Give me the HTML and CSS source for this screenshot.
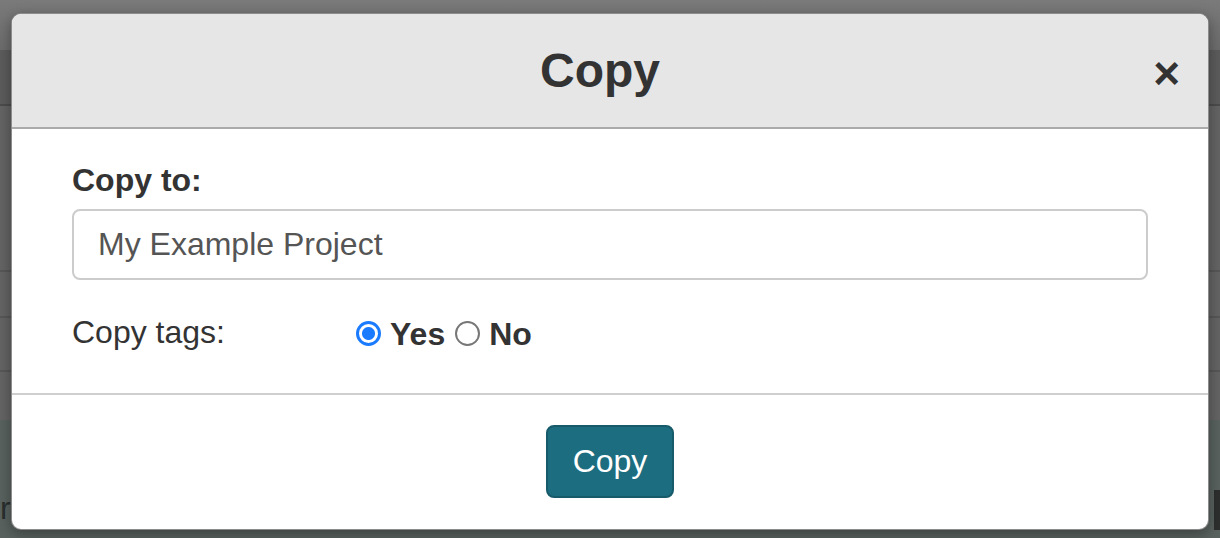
FILE: index.html
```html
<!DOCTYPE html>
<html lang="en">
<head>
<meta charset="utf-8">
<title>Copy</title>
<link rel="stylesheet" href="styles.css">
</head>
<body>
<div class="page">
  <div class="page-top"></div>
  <div class="page-nav"></div>
  <div class="page-rows">
    <div class="page-row r1"></div>
    <div class="page-row r2"></div>
    <div class="page-row r3"></div>
    <div class="page-row r4"></div>
  </div>
  <div class="page-foot"><span class="foot-text">rs</span><span class="foot-mark"></span></div>
</div>

<div class="modal" role="dialog">
  <div class="modal-header">
    <h1 class="modal-title">Copy</h1>
    <button class="close" type="button" aria-label="Close">×</button>
  </div>
  <div class="modal-body">
    <label class="field-label" for="dest">Copy to:</label>
    <input class="form-control" id="dest" type="text" value="My Example Project">
    <div class="tags-row">
      <span class="tags-label">Copy tags:</span>
      <label class="radio"><input type="radio" name="tags" checked><b>Yes</b></label>
      <label class="radio"><input type="radio" name="tags"><b>No</b></label>
    </div>
  </div>
  <div class="modal-footer">
    <button class="btn" type="button">Copy</button>
  </div>
</div>
</body>
</html>
```

FILE: styles.css
```css
* { box-sizing: border-box; }
html, body { margin: 0; padding: 0; }
body {
  width: 1220px;
  height: 538px;
  overflow: hidden;
  font-family: "Liberation Sans", Arial, Helvetica, sans-serif;
  color: #333;
  background: #636363;
  position: relative;
}

/* dimmed page behind the dialog */
.page { display: flex; flex-direction: column; height: 538px; }
.page-top { height: 50px; background: linear-gradient(#7a7a7a, #6c6c6c); }
.page-nav { height: 56px; background: #5c5c5c; border-bottom: 2px solid #4c4c4c; }
.page-rows { display: flex; flex-direction: column; height: 314px; background: #646464; }
.page-row { border-bottom: 2px solid #575757; }
.r1 { height: 166px; }
.r2 { height: 46px; }
.r3 { height: 54px; }
.r4 { height: 48px; border-bottom: none; }
.page-foot {
  flex: 1;
  background: #59625f;
  display: flex;
  justify-content: space-between;
  align-items: flex-end;
  padding-bottom: 14px;
}
.foot-text { font-size: 32px; color: #2a2f2e; margin-left: 0; line-height: 1; }
.foot-mark { width: 6px; height: 40px; background: #2d2f2f; margin-bottom: -6px; }

/* dialog */
.modal {
  position: absolute;
  left: 11px;
  top: 13px;
  width: 1198px;
  height: 517px;
  background: #fff;
  border: 1px solid rgba(0, 0, 0, 0.45);
  border-radius: 10px;
  box-shadow: 0 4px 14px rgba(0, 0, 0, 0.35);
  overflow: hidden;
  display: flex;
  flex-direction: column;
}
.modal-header {
  height: 115px;
  background: #e6e6e6;
  border-bottom: 2px solid #aaa;
  display: flex;
  align-items: center;
  justify-content: center;
  padding-right: 20px;
  position: relative;
}
.modal-title {
  margin: 0;
  font-size: 48px;
  font-weight: bold;
  line-height: 1.1;
  color: #333;
  padding-top: 2px;
}
.close {
  position: absolute;
  right: 28px;
  top: 36px;
  padding: 0;
  border: 0;
  background: none;
  font-family: "Liberation Sans", Arial, sans-serif;
  font-size: 46px;
  font-weight: bold;
  line-height: 1;
  color: #333;
  cursor: pointer;
}

.modal-body {
  padding: 30px 60px 38px 60px;
  border-bottom: 2px solid #cfcfcf;
}
.field-label {
  display: block;
  font-size: 32px;
  font-weight: bold;
  line-height: 42px;
  margin-bottom: 8px;
}
.form-control {
  display: block;
  width: 100%;
  height: 71px;
  padding: 0 24px;
  border: 2px solid #ccc;
  border-radius: 8px;
  font-family: "Liberation Sans", Arial, sans-serif;
  font-size: 32px;
  color: #555;
  background: #fff;
  outline: none;
}
.tags-row {
  display: flex;
  align-items: center;
  margin-top: 33px;
  height: 42px;
  font-size: 32px;
}
.tags-label { width: 284px; line-height: 42px; margin-top: -4px; }
.radio {
  display: flex;
  align-items: center;
  margin-right: 10px;
  line-height: 42px;
}
.radio b { margin-left: 9px; }
.radio input {
  -webkit-appearance: none;
  appearance: none;
  margin: 0;
  width: 25px;
  height: 25px;
  border-radius: 50%;
  border: 2px solid #777;
  background: #fff;
  position: relative;
  top: -1px;
}
.radio input:checked {
  border: 3px solid #1a7bff;
  background: radial-gradient(circle, #1a7bff 0 6px, #fff 7px);
}

.modal-footer {
  flex: 1;
  display: flex;
  justify-content: center;
  align-items: flex-start;
  padding-top: 30px;
}
.btn {
  width: 128px;
  height: 73px;
  border: 2px solid #175a6a;
  border-radius: 8px;
  background: #1d6d80;
  color: #fff;
  font-family: "Liberation Sans", Arial, sans-serif;
  font-size: 32px;
  line-height: 1;
  padding: 0 0 2px 0;
  cursor: pointer;
}
```
